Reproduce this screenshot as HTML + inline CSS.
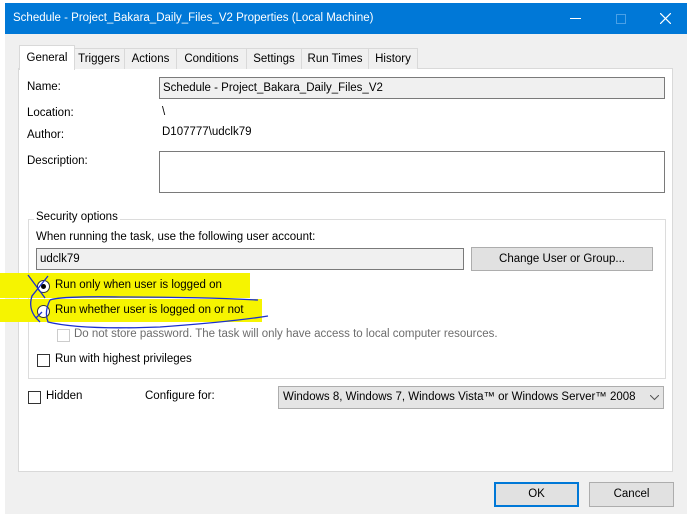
<!DOCTYPE html><html><head><style>
body{margin:0;width:687px;height:514px;background:#fff;position:relative;overflow:hidden;font-family:"Liberation Sans",sans-serif;font-size:11.5px;color:#000}
.a{position:absolute}
.win{left:5px;top:3px;width:682px;height:511px;background:#f0f0f0}
.tb{left:5px;top:3px;width:682px;height:31px;background:#0078d7;color:#fff}
.tab{position:absolute;top:48px;height:20px;border:1px solid #d9d9d9;border-bottom:none;background:#f0f0f0;line-height:20px;text-align:center}
.box{position:absolute;border:1px solid #7a7a7a;box-sizing:border-box;padding-left:3px;line-height:20px;white-space:nowrap;overflow:hidden}
.btn{position:absolute;background:#e1e1e1;border:1px solid #adadad;box-sizing:border-box;text-align:center}
.cb{position:absolute;width:11px;height:11px;border:1px solid #333;background:#fff}
</style></head><body>
<div class="a win"></div>
<div class="a tb"><span class="a" style="left:8px;top:9px;font-size:11.5px">Schedule - Project_Bakara_Daily_Files_V2 Properties (Local Machine)</span>
<div class="a" style="left:565px;top:15px;width:11px;height:1px;background:#fff"></div>
<div class="a" style="left:611px;top:11px;width:8px;height:8px;border:1px solid #4aa0e6"></div>
<svg class="a" style="left:655px;top:10px" width="11" height="11"><path d="M0 0L11 11M11 0L0 11" stroke="#fff" stroke-width="1.2"/></svg></div>
<div class="a" style="left:18px;top:68px;width:653px;height:402px;background:#fff;border:1px solid #d9d9d9"></div>
<div class="tab" style="left:19px;top:45px;width:54px;height:24px;background:#fff;z-index:2;line-height:24px">General</div>
<div class="tab" style="left:73px;width:50px">Triggers</div>
<div class="tab" style="left:124px;width:51px">Actions</div>
<div class="tab" style="left:176px;width:69px">Conditions</div>
<div class="tab" style="left:246px;width:54px">Settings</div>
<div class="tab" style="left:301px;width:66px">Run Times</div>
<div class="tab" style="left:368px;width:48px">History</div>
<span class="a" style="left:27px;top:81px">Name:</span>
<div class="box" style="left:159px;top:77px;width:506px;height:22px;background:#f0f0f0">Schedule - Project_Bakara_Daily_Files_V2</div>
<span class="a" style="left:27px;top:107px">Location:</span><span class="a" style="left:162px;top:106px">\</span>
<span class="a" style="left:27px;top:129px">Author:</span><span class="a" style="left:162px;top:126px">D107777\udclk79</span>
<span class="a" style="left:27px;top:155px">Description:</span>
<div class="box" style="left:159px;top:151px;width:506px;height:42px;background:#fff"></div>
<div class="a" style="left:28px;top:219px;width:636px;height:158px;border:1px solid #dcdcdc"></div>
<span class="a" style="left:34px;top:211px;background:#fff;padding:0 2px">Security options</span>
<span class="a" style="left:36px;top:231px">When running the task, use the following user account:</span>
<div class="box" style="left:36px;top:248px;width:428px;height:22px;background:#f0f0f0">udclk79</div>
<div class="btn" style="left:471px;top:247px;width:182px;height:24px;line-height:22px">Change User or Group...</div>
<div class="a" style="left:0;top:273px;width:250px;height:25px;background:#f6f400"></div>
<div class="a" style="left:0;top:299px;width:262px;height:23px;background:#f6f400"></div>
<div class="a" style="left:37px;top:280px;width:11px;height:11px;border:1px solid #333;border-radius:50%;background:#fff"><div class="a" style="left:3px;top:3px;width:5px;height:5px;border-radius:50%;background:#000"></div></div>
<span class="a" style="left:55px;top:279px">Run only when user is logged on</span>
<div class="a" style="left:37px;top:305px;width:11px;height:11px;border:1px solid #333;border-radius:50%;background:#fff"></div>
<span class="a" style="left:55px;top:304px">Run whether user is logged on or not</span>
<div class="cb" style="left:57px;top:329px;border-color:#ccc"></div>
<span class="a" style="left:74px;top:328px;color:#6d6d6d">Do not store password. The task will only have access to local computer resources.</span>
<div class="cb" style="left:37px;top:354px"></div>
<span class="a" style="left:55px;top:353px">Run with highest privileges</span>
<div class="cb" style="left:28px;top:391px"></div>
<span class="a" style="left:46px;top:390px">Hidden</span>
<span class="a" style="left:145px;top:390px">Configure for:</span>
<div class="box" style="left:278px;top:386px;width:386px;height:23px;background:#e5e5e5;border-color:#adadad;padding-left:4px">Windows 8, Windows 7, Windows Vista™ or Windows Server™ 2008</div>
<svg class="a" style="left:650px;top:395px" width="9" height="6"><path d="M0 0L4.5 4.5L9 0" fill="none" stroke="#555"/></svg>
<svg class="a" style="left:0;top:0" width="687" height="514"><g fill="none" stroke="#1a2fd0" stroke-width="1.3">
<path d="M28 275 L45 298 M48 276 L32 296 Q28 308 36 318 L40 322 M36 318 L42 312"/>
<path d="M50 300 Q60 296 120 297 Q200 297 258 300 M50 300 Q44 312 48 322 Q80 330 160 327 Q230 322 268 316"/>
</g></svg>
<div class="btn" style="left:494px;top:482px;width:85px;height:25px;border:2px solid #0078d7;line-height:21px">OK</div>
<div class="btn" style="left:589px;top:482px;width:85px;height:25px;line-height:23px">Cancel</div>
</body></html>
